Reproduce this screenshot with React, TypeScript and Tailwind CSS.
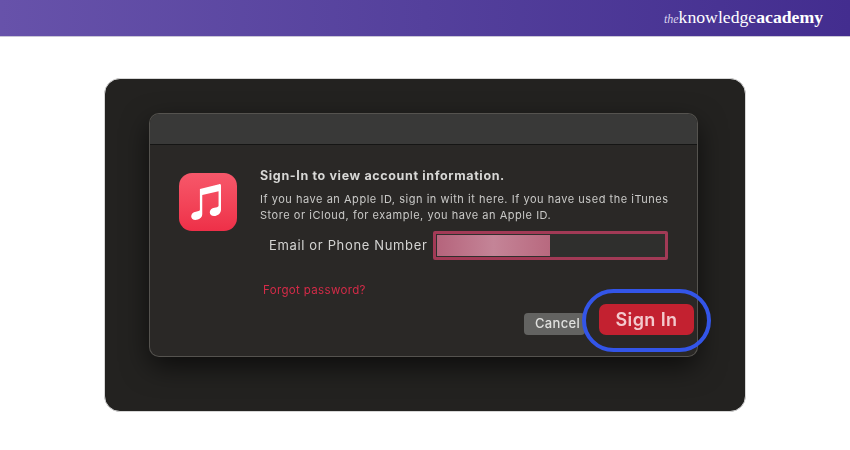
import React from "react";

function MusicIcon() {
  return (
    <div className="flex h-[58px] w-[58px] shrink-0 items-center justify-center rounded-[13px] bg-gradient-to-b from-[#f7576a] to-[#ee2f48] pr-[5px]">
      <svg width="30" height="38" viewBox="2 3 32 39" fill="#fff">
        <path d="M11.5 8.5 L32 3.5 C33.2 3.2 34 3.9 34 5 V30.5 C34 34 31.5 36.6 28 37.3 C24.6 38 22 36.2 22 33.5 C22 30.8 24 29.2 27 28.6 L29.8 28 C31 27.7 31.4 27.2 31.4 26 V11 L14 15 V35.5 C14 38.5 11.8 40.8 8.3 41.5 C4.8 42.2 2.2 40.4 2.2 37.7 C2.2 35 4.2 33.4 7.2 32.8 L10 32.2 C11.2 31.9 11.5 31.4 11.5 30.2 Z" />
      </svg>
    </div>
  );
}

export default function App() {
  return (
    <div className="h-[450px] w-[850px] overflow-hidden bg-white font-['Inter',sans-serif]">
      <header className="flex h-[37px] items-center justify-end border-b border-[#c9c6d6] bg-gradient-to-r from-[#6752aa] via-[#54409c] to-[#432d8f] pr-[27px]">
        <span className="font-['Liberation_Serif',serif] text-[17.7px] leading-none text-white">
          <span className="text-[12px] italic text-[#d9d3ee]">the</span>
          knowledge
          <span className="font-bold">academy</span>
        </span>
      </header>

      <div className="ml-[104px] mt-[41px] h-[334px] w-[642px] rounded-[16px] border border-[#d6d6d6] bg-[#232220] pl-[45px] pt-[35px]">
        <div className="relative h-[242px] w-[547px] rounded-[9px] bg-[#2a2826] shadow-[0_10px_28px_rgba(0,0,0,0.65)] ring-1 ring-[#55534f]">
          <div className="h-[31px] rounded-t-[9px] border-b border-[#151514] bg-[#393938]" />

          <div className="flex gap-[23px] pl-[29px] pt-[28px]">
            <MusicIcon />
            <div className="-mt-[5px] w-[440px] blur-[0.3px]">
              <p className="text-[12.5px] font-bold leading-[16px] tracking-[0.64px] text-[#d8d8d6]">
                Sign-In to view account information.
              </p>
              <p className="mt-[7px] whitespace-nowrap text-[11px] leading-[16px] tracking-[0.53px] text-[#c9c9c7]">
                If you have an Apple ID, sign in with it here. If you have used the iTunes
                <br />
                Store or iCloud, for example, you have an Apple ID.
              </p>
              <div className="mt-[8px] flex items-center gap-[6px] pl-[9px]">
                <span className="w-[158px] whitespace-nowrap text-[13px] tracking-[0.65px] text-[#d4d4d2]">
                  Email or Phone Number
                </span>
                <div className="h-[29px] w-[235px] rounded-[2px] border-[3px] border-[#a23a56] bg-[#2f2f2d] p-px">
                  <div className="h-full w-[113px] bg-gradient-to-r from-[#b5647c] via-[#c48497] to-[#b8697f] blur-[0.6px]" />
                </div>
              </div>
              <p className="ml-[3px] mt-[23px] text-[11.5px] leading-[14px] tracking-[0.35px] text-[#d42b48]">
                Forgot password?
              </p>
              <div className="mt-[7px] flex items-start">
                <div className="ml-[264px] mt-[9px] flex h-[22px] w-[61px] items-center rounded-[4px] bg-[#636361] pl-[11px] text-[13px] font-medium tracking-[0.3px] text-[#e0e0de]">
                  Cancel
                </div>
                <div className="ml-[14px] flex h-[31px] w-[95px] items-center justify-center rounded-[7px] bg-[#c32130] text-[18px] font-semibold tracking-[0.4px] text-[#f3c9cd]">
                  Sign In
                </div>
              </div>
            </div>
          </div>

          <div className="absolute left-[432px] top-[175px] h-[63px] w-[129px] rounded-full border-4 border-[#3355e8]" />
        </div>
      </div>
    </div>
  );
}
